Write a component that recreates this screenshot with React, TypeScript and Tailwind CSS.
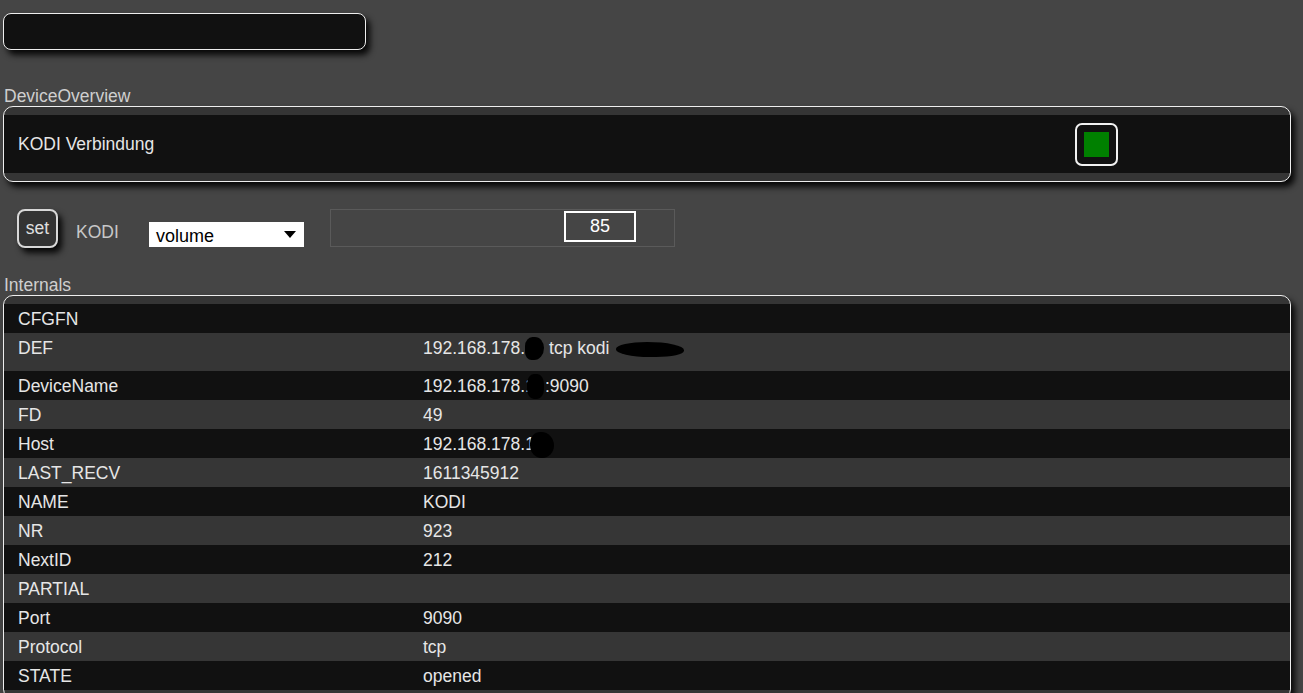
import React from "react"

type Row = { name: string; value?: React.ReactNode; tall?: boolean }

function Blob({ className }: { className: string }) {
  return <span className={"inline-block bg-black align-middle " + className} />
}

const rows: Row[] = [
  { name: "CFGFN" },
  {
    name: "DEF",
    tall: true,
    value: (
      <>
        192.168.178.
        <Blob className="h-[23px] w-[19px] rounded-[45%_55%_60%_40%] -mt-[1px]" />
        {" tcp kodi "}
        <Blob className="h-[15px] w-[68px] rounded-[50%_60%_45%_55%] ml-[2px]" />
      </>
    ),
  },
  {
    name: "DeviceName",
    value: (
      <>
        192.168.178.
        <span className="relative inline-block">
          1
          <Blob className="absolute left-[2px] top-[2px] h-[25px] w-[17px] rounded-[40%]" />
        </span>
        <span className="ml-[10px]">:9090</span>
      </>
    ),
  },
  { name: "FD", value: "49" },
  {
    name: "Host",
    value: (
      <>
        192.168.178.
        <span className="relative inline-block">
          1
          <Blob className="absolute left-[5px] top-[2px] h-[26px] w-[24px] rounded-[45%_55%_50%_50%]" />
        </span>
      </>
    ),
  },
  { name: "LAST_RECV", value: "1611345912" },
  { name: "NAME", value: "KODI" },
  { name: "NR", value: "923" },
  { name: "NextID", value: "212" },
  { name: "PARTIAL" },
  { name: "Port", value: "9090" },
  { name: "Protocol", value: "tcp" },
  { name: "STATE", value: "opened" },
]

export default function App() {
  return (
    <div className="h-[693px] overflow-hidden bg-[#454545] pl-[3px] pt-[13px] font-['Liberation_Sans',Arial,sans-serif] text-[17.5px] text-[#e6e6e6]">
      <div className="h-[37px] w-[363px] rounded-[8px] border border-[#eee] bg-[#111] shadow-[4px_5px_6px_rgba(0,0,0,0.9)]" />

      <div className="mt-[37px] h-[19px] pl-[1px] leading-[19px] text-[#cfcfcf]">DeviceOverview</div>
      <div className="w-[1288px] rounded-[10px] border border-[#eee] bg-[#353535] py-[8px] shadow-[4px_5px_6px_rgba(0,0,0,0.9)]">
        <div className="flex h-[58px] items-center bg-[#111]">
          <div className="w-[1071px] pl-[14px]">KODI Verbindung</div>
          <div className="flex h-[43px] w-[43px] items-center justify-center rounded-[7px] border-2 border-[#f2f2f2] bg-[#111]">
            <div className="h-[25px] w-[25px] bg-[#008000]" />
          </div>
        </div>
      </div>

      <div className="mt-[27px] flex items-start pl-[14px]">
        <button className="h-[39px] w-[41px] rounded-[8px] border-2 border-[#d8d8d8] bg-[#333] text-[17.5px] text-[#e0e0e0] shadow-[4px_5px_6px_rgba(0,0,0,0.9)]">
          set
        </button>
        <span className="ml-[18px] mt-[13px] w-[73px] leading-[20px] text-[#c8c8c8]">KODI</span>
        <div className="mt-[13px] flex h-[25px] w-[155px] items-center justify-between bg-white pl-[7px] pr-[8px] text-[18px] text-black">
          <span className="pt-[3px] leading-[22px]">volume</span>
          <svg width="12" height="7" viewBox="0 0 12 7">
            <path d="M0 0 H12 L6 7 Z" fill="#000" />
          </svg>
        </div>
        <div className="ml-[26px] h-[38px] w-[345px] border border-[#5a5a5a] bg-[#454545] pl-[233px] pt-[1px]">
          <div className="flex h-[31px] w-[72px] items-center justify-center border-2 border-white text-[18px] text-white">
            85
          </div>
        </div>
      </div>

      <div className="mt-[28px] h-[19px] pl-[1px] leading-[19px] text-[#cfcfcf]">Internals</div>
      <div className="w-[1288px] rounded-[10px] border border-[#eee] bg-[#353535] py-[8px] shadow-[4px_5px_6px_rgba(0,0,0,0.9)]">
        {rows.map((r, i) => (
          <div
            key={r.name}
            className={
              "flex items-start pt-[1px] leading-[29px] " +
              (r.tall ? "h-[38px] " : "h-[29px] ") +
              (i % 2 === 0 ? "bg-[#111]" : "bg-[#363636]")
            }
          >
            <div className="w-[405px] pl-[14px]">{r.name}</div>
            <div className="pl-[14px]">{r.value}</div>
          </div>
        ))}
      </div>
    </div>
  )
}
